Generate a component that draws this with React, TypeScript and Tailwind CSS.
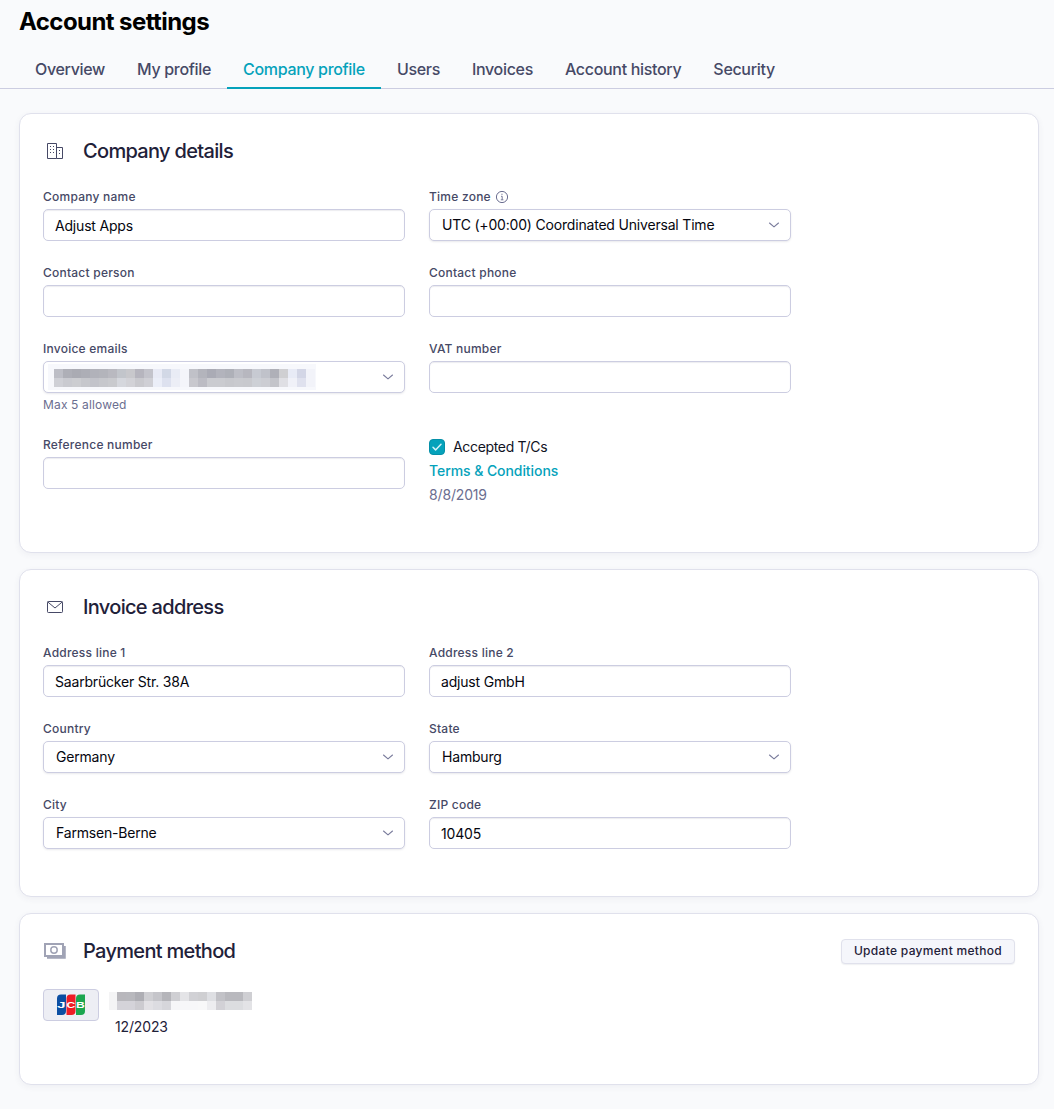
import type { ReactNode } from "react";
import clsx from "clsx";

const tabs = ["Overview", "My profile", "Company profile", "Users", "Invoices", "Account history", "Security"];

const emailPixels = [
  ["#bdbec6", "#aeafb7", "#aaabb3", "#adaeb6", "#b1b2ba", "#b3b4bb", "#b9b9c0", "#c2c5cb", "#c8c8cc", "#b6b5be", "#c3c3cb", "#e8eaf5", "#d2d8e6", "#e9ecf5", "#f4f5fa", "#c0c1c8", "#b3b4bc", "#aaabb5", "#b2b3bc", "#aeb0b8", "#bdbec6", "#b7b7bf", "#c7cad2", "#c0c2ca", "#afb0b8", "#cfcfd2", "#e8ebf6", "#d3d6e6", "#f2f3f9"],
  ["#cfd0d6", "#c9cad0", "#cccdd1", "#c6c7cc", "#c2c3ca", "#c6c7cc", "#c9cace", "#d5d7dd", "#d2d2d7", "#c9c9ce", "#cfcfd5", "#ebeef8", "#dde1ef", "#eceef6", "#f4f5fa", "#c8c8ce", "#bcbcc4", "#cacbd0", "#cacbd0", "#c7c8cd", "#c9cacf", "#c8c9ce", "#cdd0d6", "#cccdd3", "#c3c4ca", "#dfdfe4", "#f0f1f8", "#dfe1ee", "#f2f3f9"],
];

const cardPixels = [
  ["#b8b7bc", "#b8b8bd", "#aeaeb4", "#cfcfd3", "#c5c5ca", "#b5b5ba", "#cfcfd3", "#e4e4e7", "#d1d1d5", "#cfcfd2", "#dedfe3", "#c2c2c7", "#b9b9be", "#b9b9be", "#cfcfd3"],
  ["#d4d3d9", "#d4d3d9", "#cccbd0", "#e2e1e5", "#dcdce1", "#d6d6db", "#f6f6f8", "#f7f7f9", "#f7f7f9", "#f8f8f9", "#ededf0", "#d2d1d6", "#dcdde0", "#dcdde0", "#e3e3e6"],
];

const Mosaic = ({ rows }: { rows: string[][] }) => (
  <div>
    {rows.map((row, i) => (
      <div key={i} className="flex">
        {row.map((color, j) => (
          <span key={j} className="h-[9px] w-[9px]" style={{ backgroundColor: color }} />
        ))}
      </div>
    ))}
  </div>
);

const Chevron = () => (
  <svg width="12" height="8" viewBox="0 0 12 8" fill="none" stroke="#7a7c9c" strokeWidth="1.1" strokeLinecap="round" strokeLinejoin="round">
    <path d="M1.5 2 6 5.9 10.5 2" />
  </svg>
);

const BuildingIcon = () => (
  <svg width="24" height="24" viewBox="0 0 24 24" fill="none" stroke="#464966">
    <path d="M4.5 4.5h9v15h-9zM13.5 8.5h6v11h-6" strokeLinejoin="round" />
    <path d="M7 7.5h1M10 7.5h1M7 10.5h1M10 10.5h1M7 13.5h1M10 13.5h1M16 11.5h1M16 14.5h1" />
  </svg>
);

const MailIcon = () => (
  <svg width="24" height="24" viewBox="0 0 24 24" fill="none" stroke="#464966" strokeLinejoin="round">
    <rect x="4.5" y="6.5" width="15" height="11" rx="0.8" />
    <path d="m4.8 7 7.2 6 7.2-6" />
  </svg>
);

const MoneyIcon = () => (
  <svg width="24" height="24" viewBox="0 0 24 24" fill="none" stroke="#a0a3b5">
    <path d="M21.5 7v11.5H4" strokeWidth="2.5" />
    <rect x="2" y="5" width="18" height="12" fill="#fff" strokeWidth="2" />
    <circle cx="11" cy="11" r="3.2" strokeWidth="1.5" />
  </svg>
);

const InfoIcon = () => (
  <svg width="14" height="14" viewBox="0 0 14 14" fill="none" stroke="#6b6e90">
    <circle cx="7" cy="7" r="5.6" />
    <path d="M6 6.3h1.2v3.4M5.8 9.8h2.6" strokeWidth="0.9" />
    <path d="M6.4 4.3h1.1" strokeWidth="1.1" />
  </svg>
);

const JcbLogo = () => (
  <svg width="28" height="22" viewBox="0 0 28 22">
    <path d="M4 0.5h5V17a4 4 0 0 1-4 4H0V4.5a4 4 0 0 1 4-4z" fill="#0b4ea2" />
    <path d="M13.5 0.5h5V17a4 4 0 0 1-4 4h-5V4.5a4 4 0 0 1 4-4z" fill="#ee1c25" />
    <path d="M23 0.5h5V17a4 4 0 0 1-4 4h-5V4.5a4 4 0 0 1 4-4z" fill="#1ba64f" />
    <g fill="#fff" fontFamily="Liberation Sans" fontWeight="700" fontSize="9">
      <text x="0" y="14" textLength="8.5" lengthAdjust="spacingAndGlyphs">J</text>
      <text x="9.5" y="14" textLength="8.8" lengthAdjust="spacingAndGlyphs">C</text>
      <text x="19" y="14" textLength="8.8" lengthAdjust="spacingAndGlyphs">B</text>
    </g>
  </svg>
);

const Card = ({ icon, title, action, className, children }: { icon: ReactNode; title: string; action?: ReactNode; className?: string; children: ReactNode }) => (
  <section className={clsx("rounded-xl border border-[#e0e1ec] bg-white px-[23px] pt-[23px] shadow-[0_2px_6px_rgba(70,73,102,0.06)]", className)}>
    <div className="mb-6 flex h-7 items-center">
      {icon}
      <h2 className="ml-4 flex-1 text-xl font-medium tracking-[-0.68px] text-[#1f2139]">{title}</h2>
      {action}
    </div>
    {children}
  </section>
);

type FieldProps = { label: string; value?: string; select?: boolean; info?: boolean; hint?: string; children?: ReactNode };

const Field = ({ label, value, select, info, hint, children }: FieldProps) => (
  <div>
    <div className="mb-1 flex h-4 items-center gap-[4px] text-xs font-medium tracking-[0.23px] text-[#464966]">
      {label}
      {info && <InfoIcon />}
    </div>
    <div
      className={clsx(
        "flex h-8 items-center justify-between rounded-[5px] border border-[#cccde1] bg-white pr-[10px] text-sm tracking-[-0.19px] text-[#05060f]",
        select ? "pl-3 shadow-[0_1px_2px_rgba(70,73,102,0.12)]" : "pt-0.5 pl-[11px] shadow-[inset_0_1px_1px_rgba(70,73,102,0.1)]"
      )}
    >
      {children ?? <span>{value}</span>}
      {select && <Chevron />}
    </div>
    {hint && <div className="mt-1 h-4 text-xs leading-4 tracking-[0.15px] text-[#6b6e90]">{hint}</div>}
  </div>
);

const App = () => {
  return (
    <div className="h-[1109px] bg-[#f9fafc] font-['Inter',sans-serif] antialiased">
      <header>
        <h1 className="h-[50px] pt-1.5 pl-[19px] text-2xl leading-8 font-bold tracking-[-0.57px] text-black">Account settings</h1>
        <nav className="flex h-[39px] border-b border-[#cccde1] pl-[19px]">
          {tabs.map((tab) => (
            <a
              key={tab}
              className={clsx(
                "h-[39px] px-4 pt-[7px] text-base font-medium tracking-[-0.32px]",
                tab === "Company profile" ? "border-b-2 border-[#05a2bb] text-[#05a2bb]" : "text-[#464966]"
              )}
            >
              {tab}
            </a>
          ))}
        </nav>
      </header>

      <main className="flex flex-col gap-4 pt-6 pr-[15px] pl-[19px]">
        <Card icon={<BuildingIcon />} title="Company details" className="pb-[47px]">
          <div className="grid grid-cols-[362px_362px] gap-6">
            <Field label="Company name" value="Adjust Apps" />
            <Field label="Time zone" value="UTC (+00:00) Coordinated Universal Time" select info />
            <Field label="Contact person" />
            <Field label="Contact phone" />
            <Field label="Invoice emails" select hint="Max 5 allowed">
              <div className="-ml-2 h-[26px] w-[268px] bg-[#f7f8fc] pt-[5px] pl-1.5">
                <Mosaic rows={emailPixels} />
              </div>
            </Field>
            <Field label="VAT number" />
            <Field label="Reference number" />
            <div className="-mt-0.5 h-[70px] text-sm leading-6">
              <div className="flex items-center gap-2 tracking-[-0.33px] text-[#11131f]">
                <span className="flex h-4 w-4 items-center justify-center rounded-[4px] border border-[#0590a8] bg-[#05a2bb]">
                  <svg width="12" height="12" viewBox="0 0 12 12" fill="none" stroke="#d5f3f8" strokeWidth="1.5" strokeLinecap="round" strokeLinejoin="round" className="shrink-0">
                    <path d="m2 6.3 2.6 2.6L10 3.2" />
                  </svg>
                </span>
                Accepted T/Cs
              </div>
              <a className="block font-medium tracking-[-0.07px] text-[#05a2bb]">Terms &amp; Conditions</a>
              <div className="tracking-[-0.16px] text-[#6b6e90]">8/8/2019</div>
            </div>
          </div>
        </Card>

        <Card icon={<MailIcon />} title="Invoice address" className="pb-[47px]">
          <div className="grid grid-cols-[362px_362px] gap-6">
            <Field label="Address line 1" value="Saarbrücker Str. 38A" />
            <Field label="Address line 2" value="adjust GmbH" />
            <Field label="Country" value="Germany" select />
            <Field label="State" value="Hamburg" select />
            <Field label="City" value="Farmsen-Berne" select />
            <Field label="ZIP code" value="10405" />
          </div>
        </Card>

        <Card
          icon={<MoneyIcon />}
          title="Payment method"
          className="h-[172px]"
          action={
            <button className="h-[25px] w-[174px] rounded-[4px] border border-[#e0e1ec] bg-[#f5f6fb] text-xs font-medium tracking-[0.31px] text-[#1f2139] shadow-[0_1px_1px_rgba(70,73,102,0.08)]">
              Update payment method
            </button>
          }
        >
          <div className="flex">
            <div className="flex h-8 w-14 items-center justify-center rounded-[4px] border border-[#cccde1] bg-[#edeef4]">
              <JcbLogo />
            </div>
            <div className="ml-2.5 pt-[3px]">
              <div className="flex">
                <span className="h-[18px] w-2 bg-[#f4f4f5]" />
                <Mosaic rows={cardPixels} />
              </div>
              <div className="mt-[7px] pl-1.5 text-sm tracking-[-0.14px] text-[#1f2139]">12/2023</div>
            </div>
          </div>
        </Card>
      </main>
    </div>
  );
};

export default App;
